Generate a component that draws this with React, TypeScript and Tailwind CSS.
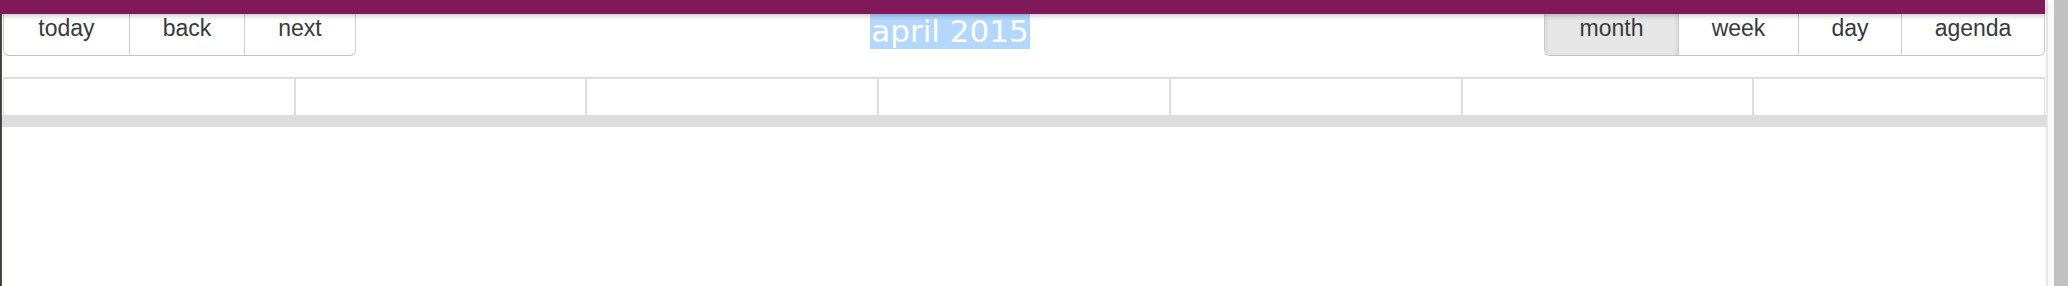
const LEFT_BUTTONS = [
  { label: "today", w: "w-[125px]" },
  { label: "back", w: "w-[115px]" },
  { label: "next", w: "w-[111px]" },
];

const VIEWS = [
  { label: "month", w: "w-[133px]", active: true },
  { label: "week", w: "w-[120px]", active: false },
  { label: "day", w: "w-[103px]", active: false },
  { label: "agenda", w: "w-[143px]", active: false },
];

const DAYS = [0, 1, 2, 3, 4, 5, 6];

function Toolbar() {
  return (
    <div className="flex h-[56px] items-stretch px-px">
      <div className="flex overflow-hidden rounded-b-[6px] border border-[#cccccc] border-b-[#c2c2c2] bg-white">
        {LEFT_BUTTONS.map((b, i) => (
          <button
            key={b.label}
            type="button"
            className={`${b.w} ${i > 0 ? "border-l border-[#cccccc]" : ""} flex items-center justify-center text-[23px] text-[#373a3c]`}
          >
            {b.label}
          </button>
        ))}
      </div>

      {/* titulo seleccionado, igual que en la captura */}
      <div className="flex flex-1 justify-center">
        <span className="mt-[13px] inline-block h-[36px] bg-[#b3d7fe] px-px text-[31px] leading-[36px] text-white [font-family:'DejaVu_Sans',Verdana,sans-serif]">
          april 2015
        </span>
      </div>

      <div className="flex overflow-hidden rounded-b-[6px] border border-[#cccccc] border-b-[#c2c2c2] bg-white">
        {VIEWS.map((v, i) => (
          <button
            key={v.label}
            type="button"
            className={`${v.w} ${i > 0 ? "border-l border-[#cccccc]" : ""} ${
              v.active
                ? "bg-[#e6e6e6] shadow-[inset_0_3px_5px_rgba(0,0,0,0.125)]"
                : "bg-white"
            } flex items-center justify-center text-[23px] text-[#373a3c]`}
          >
            {v.label}
          </button>
        ))}
      </div>
    </div>
  );
}

export default function App() {
  return (
    <div className="relative flex h-[286px] w-[2068px] overflow-hidden bg-white [font-family:'Liberation_Sans',Arial,sans-serif]">
      <div className="w-[2px] bg-gradient-to-r from-[#2f342c] to-[#5b5f57]" />

      <div className="flex w-[2044px] flex-col">
        <Toolbar />

        <div className="mx-px mt-[21px] flex h-[38px] border-x border-t-2 border-[#dddddd]">
          {DAYS.map((d) => (
            <div
              key={d}
              className={`flex-1 ${d > 0 ? "border-l-2 border-[#dddddd]" : ""}`}
            />
          ))}
        </div>
        <div className="h-[12px] bg-[#dddddd]" />
        <div className="flex-1 bg-white" />
      </div>

      <div className="w-[8px] border-l-2 border-[#e6e6e6] bg-[#f9f9f9]" />
      <div className="w-[14px] bg-[#c1c1c1]" />

      {/* barra superior morada que tapa la parte alta de los botones */}
      <div className="absolute left-0 top-0 h-[14px] w-[2045px] bg-[#801959] shadow-[0_2px_5px_rgba(0,0,0,0.22)]" />
    </div>
  );
}
